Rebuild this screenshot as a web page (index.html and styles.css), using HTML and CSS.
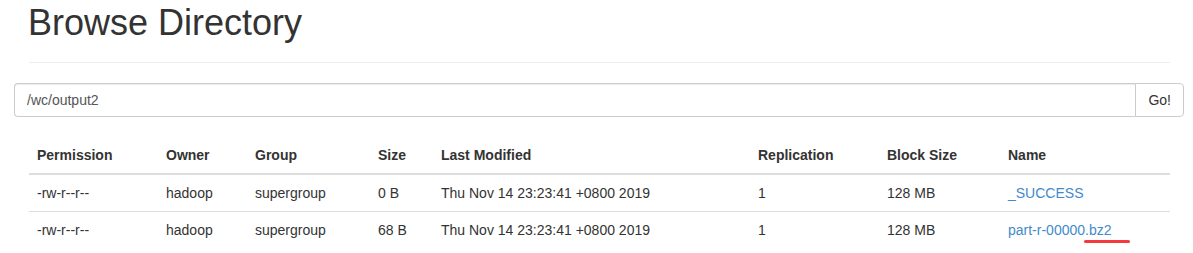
FILE: index.html
```html
<!DOCTYPE html>
<html>
<head>
<meta charset="utf-8">
<title>Browse Directory</title>
<link rel="stylesheet" href="styles.css">
</head>
<body>
<div class="page">
  <div class="page-header">
    <h1>Browse Directory</h1>
  </div>
  <form class="input-group" onsubmit="return false">
    <input class="form-control" type="text" value="/wc/output2">
    <button class="btn" type="button">Go!</button>
  </form>
  <table class="table">
    <colgroup>
      <col class="c1"><col class="c2"><col class="c3"><col class="c4"><col class="c5"><col class="c6"><col class="c7"><col class="c8">
    </colgroup>
    <thead>
      <tr>
        <th>Permission</th><th>Owner</th><th>Group</th><th>Size</th><th>Last Modified</th><th>Replication</th><th>Block Size</th><th>Name</th>
      </tr>
    </thead>
    <tbody>
      <tr>
        <td>-rw-r--r--</td><td>hadoop</td><td>supergroup</td><td>0 B</td><td>Thu Nov 14 23:23:41 +0800 2019</td><td>1</td><td>128 MB</td><td><a href="#">_SUCCESS</a></td>
      </tr>
      <tr>
        <td>-rw-r--r--</td><td>hadoop</td><td>supergroup</td><td>68 B</td><td>Thu Nov 14 23:23:41 +0800 2019</td><td>1</td><td>128 MB</td><td><a href="#">part-r-00000<span class="mark">.bz2</span></a></td>
      </tr>
    </tbody>
  </table>
</div>
</body>
</html>
```

FILE: styles.css
```css
* { box-sizing: border-box; }
html, body { margin: 0; padding: 0; background: #fff; }
body {
  font-family: "Liberation Sans", Arial, Helvetica, sans-serif;
  font-size: 14px;
  line-height: 20px;
  color: #333;
}
.page {
  padding: 0 9px 0 14px;
}
.page-header {
  margin: 0 14px 0 15px;
  padding-bottom: 19px;
  border-bottom: 1px solid #eee;
}
.page-header h1 {
  margin: 3px 0 0 -1px;
  font-size: 36px;
  line-height: 40px;
  font-weight: 500;
  color: #333;
}
.input-group {
  display: flex;
  margin: 20px 0 0;
}
.form-control {
  flex: 1;
  height: 34px;
  margin: 0;
  padding: 6px 12px;
  font-family: inherit;
  font-size: 14px;
  line-height: 20px;
  color: #555;
  border: 1px solid #ccc;
  border-right: 0;
  border-radius: 4px 0 0 4px;
  box-shadow: inset 0 1px 1px rgba(0,0,0,0.075);
  outline: none;
}
.btn {
  height: 34px;
  margin: 0;
  padding: 6px 12px;
  font-family: inherit;
  font-size: 14px;
  line-height: 20px;
  color: #333;
  background: #fff;
  border: 1px solid #ccc;
  border-radius: 0 4px 4px 0;
}
.table {
  width: calc(100% - 29px);
  margin: 20px 14px 0 15px;
  border-collapse: collapse;
  border-spacing: 0;
  table-layout: fixed;
}
.c1 { width: 129px; }
.c2 { width: 89px; }
.c3 { width: 123px; }
.c4 { width: 63px; }
.c5 { width: 317px; }
.c6 { width: 129px; }
.c7 { width: 121px; }
.c8 { width: 170px; }
.table th, .table td {
  padding: 8px;
  text-align: left;
  vertical-align: top;
  line-height: 20px;
  white-space: nowrap;
}
.table th {
  font-weight: bold;
  border-bottom: 2px solid #ddd;
}
.table tbody tr + tr td {
  border-top: 1px solid #ddd;
}
.table a {
  color: #428bca;
  text-decoration: none;
}
.mark {
  position: relative;
}
.mark::after {
  content: "";
  position: absolute;
  left: -1px;
  top: 18px;
  width: 46px;
  height: 3px;
  border-radius: 2px;
  background: #f23a3f;
}
```
